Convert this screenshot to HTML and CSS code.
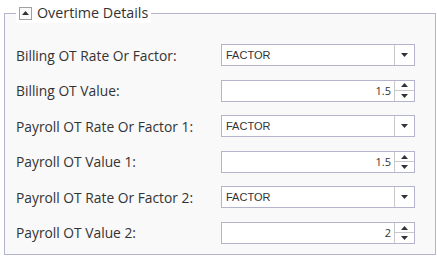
FILE: index.html
```html
<!DOCTYPE html>
<html lang="en">
<head>
    <meta charset="UTF-8">
    <title>Overtime Details</title>
    <link rel="stylesheet" href="styles.css">
</head>
<body>
    <fieldset class="grupo">
        <legend class="grupo-titulo">
            <span class="recolher">
                <svg width="7" height="4" viewBox="0 0 7 4"><path d="M0 4 L3.5 0 L7 4 Z" fill="#333"/></svg>
            </span>
            <span class="titulo">Overtime Details</span>
        </legend>

        <div class="linhas">
            <div class="linha">
                <label>Billing OT Rate Or Factor:</label>
                <div class="combo">
                    <span class="combo-texto">FACTOR</span>
                    <span class="combo-seta"><svg width="7" height="4" viewBox="0 0 7 4"><path d="M0 0 L7 0 L3.5 4 Z" fill="#333"/></svg></span>
                </div>
            </div>
            <div class="linha">
                <label>Billing OT Value:</label>
                <div class="numero">
                    <span class="numero-valor">1.5</span>
                    <span class="numero-setas">
                        <span class="seta"><svg width="7" height="4" viewBox="0 0 7 4"><path d="M0 4 L3.5 0 L7 4 Z" fill="#333"/></svg></span>
                        <span class="seta"><svg width="7" height="4" viewBox="0 0 7 4"><path d="M0 0 L7 0 L3.5 4 Z" fill="#333"/></svg></span>
                    </span>
                </div>
            </div>
            <div class="linha">
                <label>Payroll OT Rate Or Factor 1:</label>
                <div class="combo">
                    <span class="combo-texto">FACTOR</span>
                    <span class="combo-seta"><svg width="7" height="4" viewBox="0 0 7 4"><path d="M0 0 L7 0 L3.5 4 Z" fill="#333"/></svg></span>
                </div>
            </div>
            <div class="linha">
                <label>Payroll OT Value 1:</label>
                <div class="numero">
                    <span class="numero-valor">1.5</span>
                    <span class="numero-setas">
                        <span class="seta"><svg width="7" height="4" viewBox="0 0 7 4"><path d="M0 4 L3.5 0 L7 4 Z" fill="#333"/></svg></span>
                        <span class="seta"><svg width="7" height="4" viewBox="0 0 7 4"><path d="M0 0 L7 0 L3.5 4 Z" fill="#333"/></svg></span>
                    </span>
                </div>
            </div>
            <div class="linha">
                <label>Payroll OT Rate Or Factor 2:</label>
                <div class="combo">
                    <span class="combo-texto">FACTOR</span>
                    <span class="combo-seta"><svg width="7" height="4" viewBox="0 0 7 4"><path d="M0 0 L7 0 L3.5 4 Z" fill="#333"/></svg></span>
                </div>
            </div>
            <div class="linha">
                <label>Payroll OT Value 2:</label>
                <div class="numero">
                    <span class="numero-valor">2</span>
                    <span class="numero-setas">
                        <span class="seta"><svg width="7" height="4" viewBox="0 0 7 4"><path d="M0 4 L3.5 0 L7 4 Z" fill="#333"/></svg></span>
                        <span class="seta"><svg width="7" height="4" viewBox="0 0 7 4"><path d="M0 0 L7 0 L3.5 4 Z" fill="#333"/></svg></span>
                    </span>
                </div>
            </div>
        </div>
    </fieldset>
</body>
</html>
```

FILE: styles.css
```css
body {
    margin: 0;
    padding: 0;
    background-color: #ffffff;
    font-family: 'Open Sans', sans-serif;
    color: #333333;
}

.grupo {
    margin: 3px 1px 1px 4px;
    padding: 0 20px 0 11px;
    border: 1px solid #b4b4cc;
    background-color: #f9f9f9;
    height: 252px;
    box-sizing: border-box;
}

.grupo-titulo {
    display: flex;
    align-items: center;
    gap: 5px;
    padding: 0 3px;
    margin-left: 0;
    background: #ffffff;
}

.recolher {
    width: 11px;
    height: 11px;
    border: 1px solid #a0a0a0;
    background: #fafafa;
    display: flex;
    align-items: center;
    justify-content: center;
}

.titulo {
    font-size: 14.3px;
    color: #333333;
    line-height: 20px;
}

.linhas {
    display: flex;
    flex-direction: column;
    gap: 11.6px;
    padding-top: 20px;
}

.linha {
    display: flex;
    align-items: center;
    height: 24px;
}

.linha label {
    width: 205px;
    font-size: 13.8px;
}

.combo, .numero {
    width: 194px;
    height: 22px;
    border: 1px solid #b4b4cc;
    background: #ffffff;
    display: flex;
    box-sizing: border-box;
}

.combo-texto {
    flex: 1;
    font-family: 'Liberation Sans', sans-serif;
    font-size: 11px;
    line-height: 20px;
    padding-left: 4px;
}

.combo-seta {
    width: 19px;
    border-left: 1px solid #c8c8c8;
    display: flex;
    align-items: center;
    justify-content: center;
}

.numero-valor {
    flex: 1;
    text-align: right;
    font-size: 11px;
    line-height: 20px;
    padding-right: 3px;
}

.numero-setas {
    width: 19px;
    border-left: 1px solid #c8c8c8;
    display: flex;
    flex-direction: column;
}

.seta {
    flex: 1;
    display: flex;
    align-items: center;
    justify-content: center;
}

.seta + .seta {
    border-top: 1px solid #c8c8c8;
}
```
